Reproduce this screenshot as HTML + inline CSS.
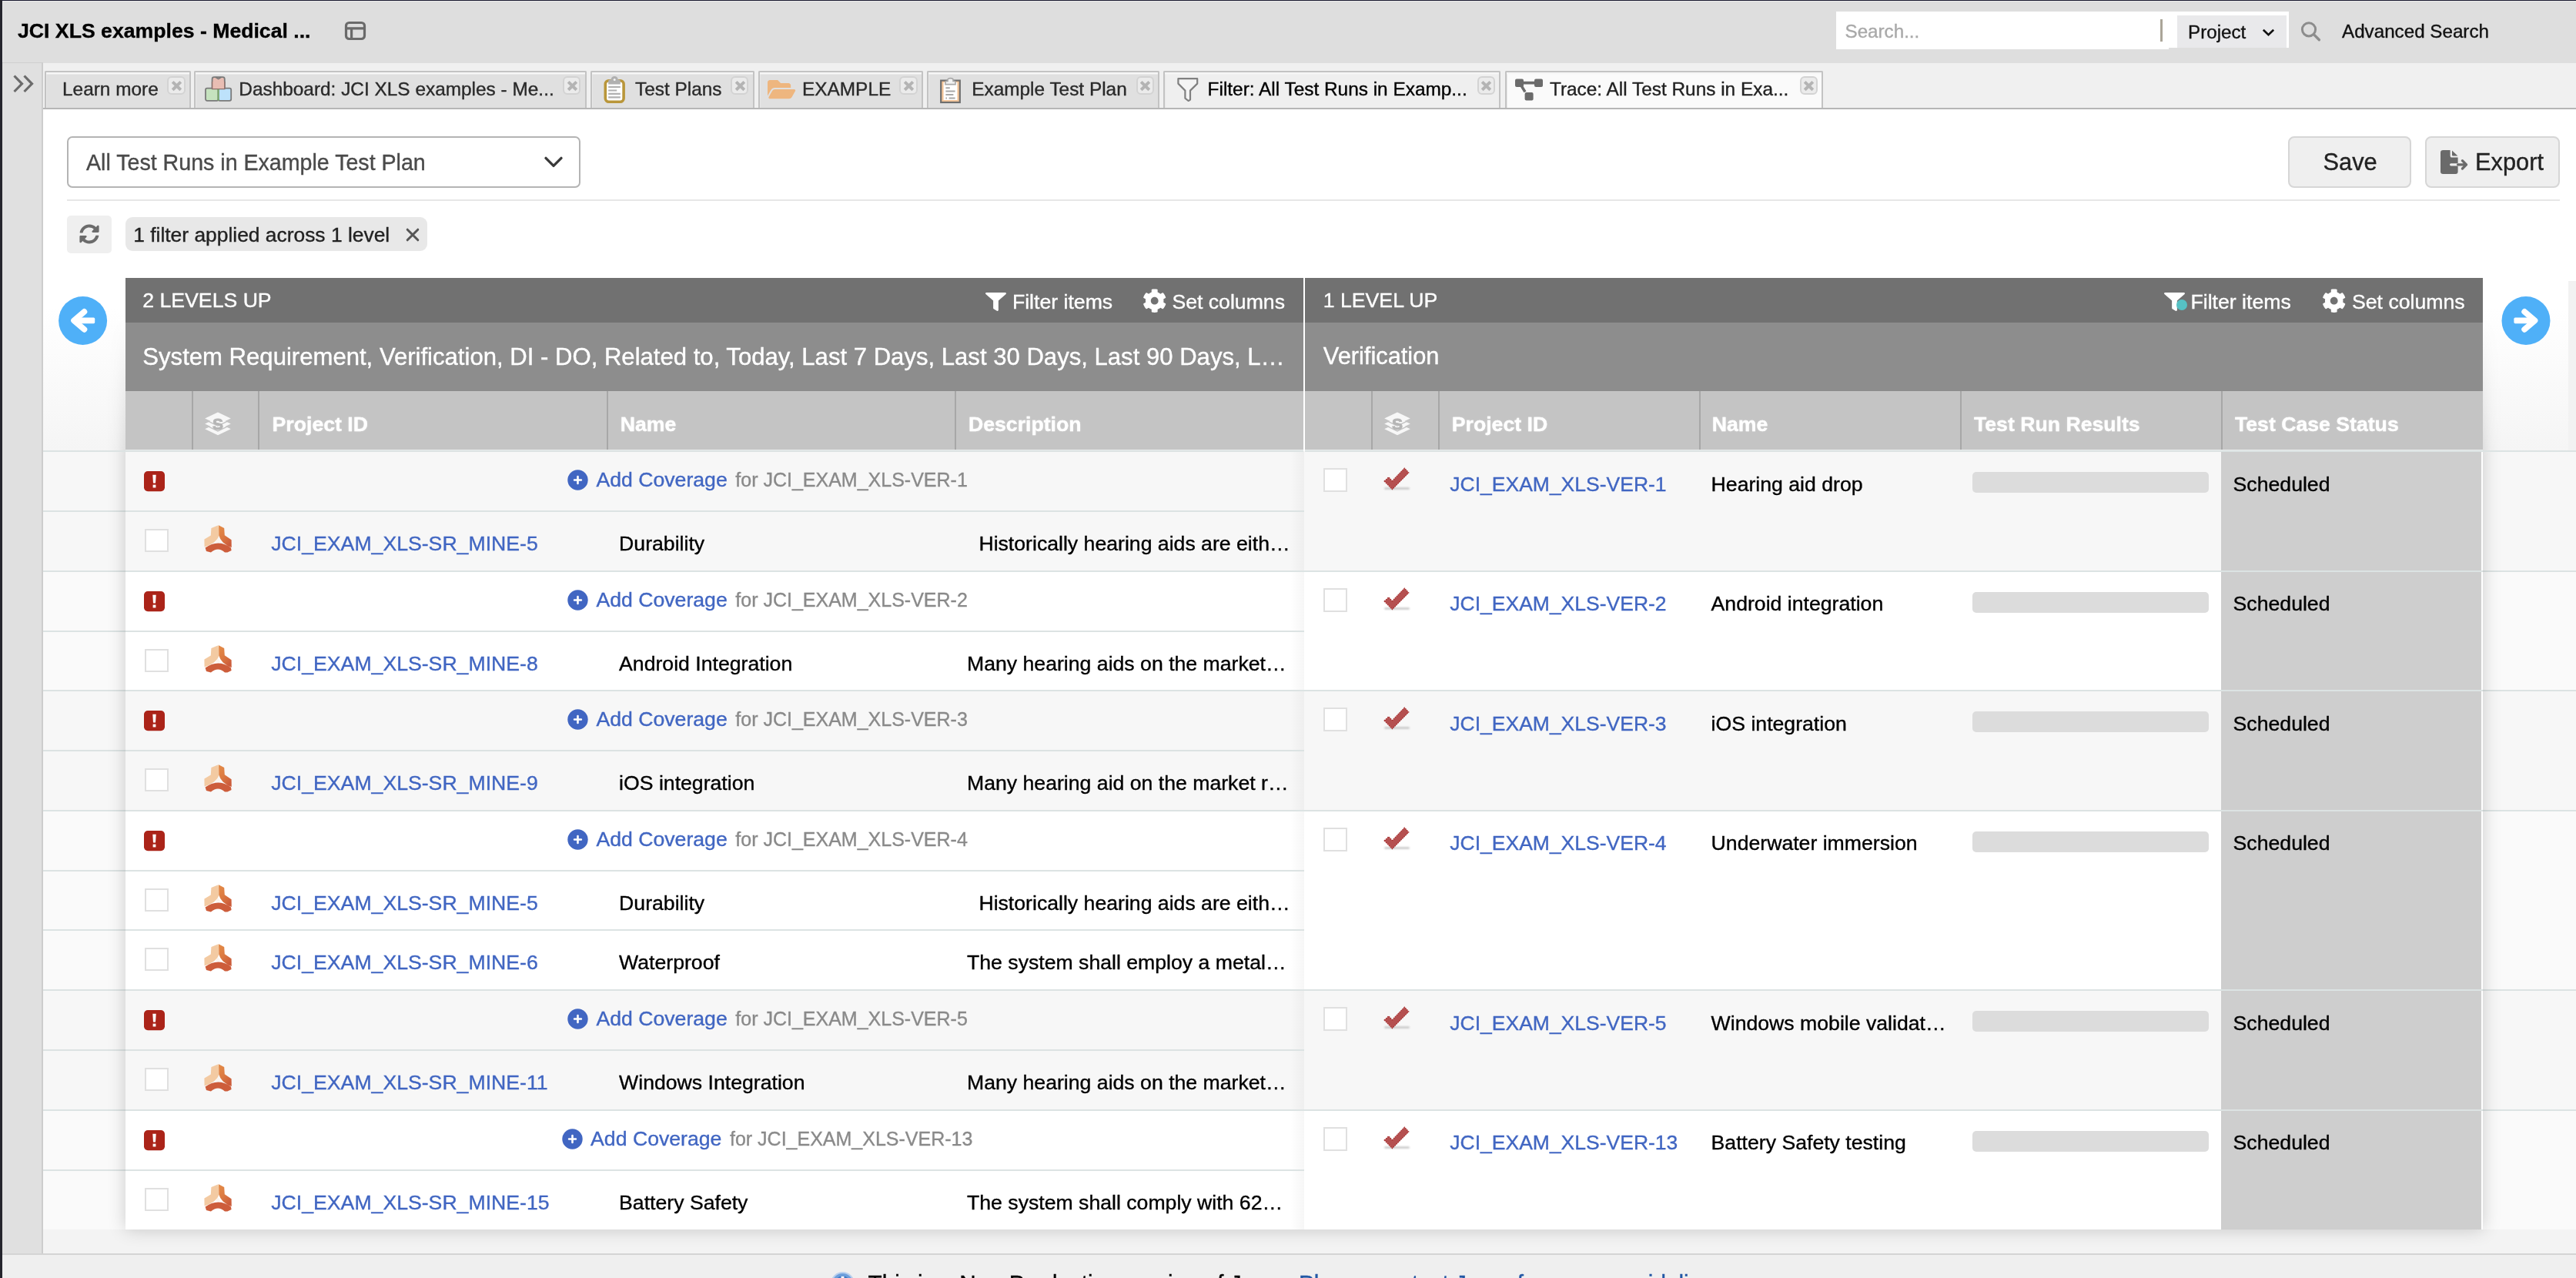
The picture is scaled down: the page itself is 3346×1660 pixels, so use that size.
<!DOCTYPE html>
<html><head><meta charset="utf-8"><title>Trace</title>
<style>
html,body{margin:0;padding:0;}
body{width:3346px;height:1660px;overflow:hidden;background:#fff;position:relative;font-family:"Liberation Sans",sans-serif;}
.t{position:absolute;white-space:pre;-webkit-text-stroke:0.36px currentColor;}
.b{position:absolute;}
svg{position:absolute;overflow:visible;}
.tab{position:absolute;top:92.3px;height:48px;box-sizing:border-box;border:2px solid #c3c3c3;border-bottom:none;background:#e0e0e0;border-radius:2px 2px 0 0;box-shadow:inset 0 2.5px 0 #f6f6f6, inset 1px 0 0 #e8e8e8;}
.cx{position:absolute;top:99.3px;width:23.4px;height:23.4px;box-sizing:border-box;border:2px solid #d3d3d3;border-radius:6px;background:#ebebeb;}
.cb{position:absolute;width:30.6px;height:30.6px;box-sizing:border-box;border:2px solid #e0e0e0;background:#fff;}
</style></head><body><div id="w" style="position:absolute;left:0;top:0;width:3346px;height:1660px;will-change:transform;">

<div class="b" style="left:0px;top:0px;width:3346px;height:81.5px;background:#dedede;"></div>
<div class="b" style="left:0px;top:0px;width:3346px;height:1px;background:#18182e;"></div>
<div class="b" style="left:3px;top:1px;width:3343px;height:1px;background:#eaeaea;"></div>
<div class="b" style="left:3px;top:1px;width:1px;height:80px;background:#eaeaea;"></div>
<div class="b" style="left:56px;top:81.5px;width:3290px;height:58.5px;background:#f0f0f0;"></div>
<div class="b" style="left:3px;top:81px;width:53px;height:1547px;background:#e0e0e0;box-sizing:border-box;border-top:1.5px solid #cfcfcf;border-right:2px solid #cdcdcd;"></div>
<div class="b" style="left:0px;top:0px;width:3px;height:1660px;background:#25252d;"></div>
<div class="b" style="left:56px;top:140px;width:3290px;height:2px;background:#b6b6b6;"></div>
<div class="t" style="left:23px;top:26.74px;font-size:26.65px;line-height:26.65px;color:#000;font-weight:700;">JCI XLS examples - Medical ...</div>
<svg style="left:447px;top:27px" width="29" height="26" viewBox="0 0 29 26"><rect x="2.5" y="2.5" width="24" height="21" rx="4" fill="none" stroke="#6a6a6a" stroke-width="3.2"/><path d="M2.5 9.8H26.5M9.6 9.8V23.5" stroke="#6a6a6a" stroke-width="3.2" fill="none"/></svg>
<div class="b" style="left:2385px;top:15px;width:432px;height:49px;background:#fff;"></div>
<div class="b" style="left:2817px;top:15px;width:156px;height:47px;background:#fff;"></div>
<div class="b" style="left:2828px;top:20px;width:142px;height:42px;background:#e9e9eb;"></div>
<div class="b" style="left:2806px;top:25px;width:3px;height:29px;background:#aaa598;"></div>
<div class="t" style="left:2396.5px;top:28.81px;font-size:24.2px;line-height:24.2px;color:#a9a9a9;font-weight:400;">Search...</div>
<div class="t" style="left:2842px;top:29.71px;font-size:24.2px;line-height:24.2px;color:#111;font-weight:400;">Project</div>
<svg style="left:2938px;top:37px" width="17" height="11" viewBox="0 0 17 11"><path d="M1.8 1.8L8.5 8.3L15.2 1.8" fill="none" stroke="#111" stroke-width="2.6"/></svg>
<svg style="left:2986px;top:27px" width="30" height="28" viewBox="0 0 30 28"><circle cx="13" cy="11.3" r="8.6" fill="none" stroke="#8c8c8c" stroke-width="3"/><path d="M19.3 17.6L26.4 24.8" stroke="#8c8c8c" stroke-width="3.4" stroke-linecap="round"/></svg>
<div class="t" style="left:3042px;top:29.11px;font-size:24.2px;line-height:24.2px;color:#111;font-weight:400;">Advanced Search</div>
<svg style="left:16px;top:96px" width="30" height="26" viewBox="0 0 30 26"><path d="M2.5 2.5L12.5 12.8L2.5 23M15.5 2.5L25.5 12.8L15.5 23" fill="none" stroke="#6b6b6b" stroke-width="3.2"/></svg>
<div class="tab" style="left:58px;width:189.7px;background:#e0e0e0"></div>
<div class="t" style="left:81px;top:103.65px;font-size:24.4px;line-height:24.4px;color:#2a2a2a;font-weight:400;">Learn more</div>
<div class="cx" style="left:217.3px"></div><svg style="left:217.70000000000002px;top:99.8px" width="23" height="23" viewBox="0 0 23 23"><path d="M6.2 6.4L16.8 16.8M16.8 6.4L6.2 16.8" stroke="#b4b4b4" stroke-width="4" fill="none" style="filter:blur(.55px)"/></svg>
<div class="tab" style="left:252px;width:509.5px;background:#e0e0e0"></div>
<svg style="left:265.6px;top:98px" width="36" height="35" viewBox="0 0 36 35"><rect x="9.6" y="2.2" width="16.2" height="15.5" rx="2.5" fill="#e8bdb3" stroke="#7a7a7a" stroke-width="1.8"/><path d="M14 2.2l3.7 2.2l3.7-2.2" fill="none" stroke="#7a7a7a" stroke-width="1.8"/><rect x="1" y="16.6" width="16.6" height="16.2" rx="2" fill="#c5e2be" stroke="#7a7a7a" stroke-width="1.8"/><rect x="17.6" y="16.6" width="16.6" height="16.2" rx="2" fill="#bde2fb" stroke="#7a7a7a" stroke-width="1.8"/><rect x="9.6" y="8" width="16.2" height="9.2" fill="#e8bdb3"/><path d="M9.6 8v9.6h16.2V8" fill="none" stroke="#8a6f6a" stroke-width="1.4"/><path d="M17.6 17.8V32.6" stroke="#7aaa6a" stroke-width="2"/></svg>
<div class="t" style="left:310.3px;top:103.65px;font-size:24.4px;line-height:24.4px;color:#2a2a2a;font-weight:400;">Dashboard: JCI XLS examples - Me...</div>
<div class="cx" style="left:731.1px"></div><svg style="left:731.5px;top:99.8px" width="23" height="23" viewBox="0 0 23 23"><path d="M6.2 6.4L16.8 16.8M16.8 6.4L6.2 16.8" stroke="#b4b4b4" stroke-width="4" fill="none" style="filter:blur(.55px)"/></svg>
<div class="tab" style="left:767px;width:212.5px;background:#e0e0e0"></div>
<svg style="left:784.3px;top:98px" width="30" height="37" viewBox="0 0 30 37"><rect x="2.3" y="6.8" width="23.8" height="27.4" rx="4.5" fill="#fff" stroke="#b9963a" stroke-width="3.6"/><path d="M6.2 11.6V7.2Q6.2 5.6 8 5.6H9.6A4.6 4.6 0 0 1 18.8 5.6H20.2Q21.8 5.6 21.8 7.2V11.6Z" fill="#b0b0b0"/><circle cx="14.2" cy="5.4" r="1.5" fill="#f4f4f4"/><path d="M6.2 15h15.6M6.2 19.5h11M6.2 23.9h15.6M6.2 28.3h15.6" stroke="#b0b0b0" stroke-width="2.2"/></svg>
<div class="t" style="left:825px;top:103.65px;font-size:24.4px;line-height:24.4px;color:#2a2a2a;font-weight:400;">Test Plans</div>
<div class="cx" style="left:949.1px"></div><svg style="left:949.5px;top:99.8px" width="23" height="23" viewBox="0 0 23 23"><path d="M6.2 6.4L16.8 16.8M16.8 6.4L6.2 16.8" stroke="#b4b4b4" stroke-width="4" fill="none" style="filter:blur(.55px)"/></svg>
<div class="tab" style="left:984.6px;width:214.1px;background:#e0e0e0"></div>
<svg style="left:996.9px;top:100.4px" width="36.2" height="32.2" viewBox="0 0 576 512"><path fill="#eeb67f" d="M572.694 292.093L500.27 416.248A63.997 63.997 0 0 1 444.989 448H45.025c-18.523 0-30.064-20.093-20.731-36.093l72.424-124.155A64 64 0 0 1 152 256h399.964c18.523 0 30.064 20.093 20.73 36.093zM152 224h328v-48c0-26.51-21.49-48-48-48H272l-64-64H48C21.49 64 0 85.49 0 112v278.046l69.077-118.418C86.214 242.25 117.989 224 152 224z"/></svg>
<div class="t" style="left:1042px;top:103.65px;font-size:24.4px;line-height:24.4px;color:#2a2a2a;font-weight:400;">EXAMPLE</div>
<div class="cx" style="left:1168.3px"></div><svg style="left:1168.7px;top:99.8px" width="23" height="23" viewBox="0 0 23 23"><path d="M6.2 6.4L16.8 16.8M16.8 6.4L6.2 16.8" stroke="#b4b4b4" stroke-width="4" fill="none" style="filter:blur(.55px)"/></svg>
<div class="tab" style="left:1204px;width:302.0px;background:#e0e0e0"></div>
<svg style="left:1221.4px;top:100px" width="28" height="35" viewBox="0 0 28 35"><rect x="1.2" y="4.6" width="24.6" height="28.4" fill="#f5c69a" stroke="#6e6e6e" stroke-width="2.2"/><rect x="4.6" y="7" width="17.8" height="23" fill="#fff"/><path d="M7 9.6V6.6Q7 5.4 8.4 5.4H10V3.6Q10 1.6 13.5 1.6T17 3.6V5.4H18.6Q20 5.4 20 6.6V9.6Z" fill="#f2f2f2" stroke="#a8a8a8" stroke-width="1.6"/><path d="M7.4 14.2h5.4M7.4 18.6h12.2M7.4 23h10M11.6 27.4h8M7.4 27.4h1.6" stroke="#a8a8a8" stroke-width="2"/></svg>
<div class="t" style="left:1262.2px;top:103.65px;font-size:24.4px;line-height:24.4px;color:#2a2a2a;font-weight:400;">Example Test Plan</div>
<div class="cx" style="left:1475.6px"></div><svg style="left:1476.0px;top:99.8px" width="23" height="23" viewBox="0 0 23 23"><path d="M6.2 6.4L16.8 16.8M16.8 6.4L6.2 16.8" stroke="#b4b4b4" stroke-width="4" fill="none" style="filter:blur(.55px)"/></svg>
<div class="tab" style="left:1511px;width:438.0px;background:#efefef"></div>
<svg style="left:1528.6px;top:100px" width="29" height="33" viewBox="0 0 29 33"><path d="M1.4 2.2H26.2V8.6L17 17.6V29.6L14.6 31L10.4 27.6V17.6L1.4 8.6Z" fill="#f4f4f4" stroke="#808080" stroke-width="2.2" stroke-linejoin="round"/></svg>
<div class="t" style="left:1568.6px;top:103.65px;font-size:24.4px;line-height:24.4px;color:#000;font-weight:400;">Filter: All Test Runs in Examp...</div>
<div class="cx" style="left:1918.6px"></div><svg style="left:1919.0px;top:99.8px" width="23" height="23" viewBox="0 0 23 23"><path d="M6.2 6.4L16.8 16.8M16.8 6.4L6.2 16.8" stroke="#b4b4b4" stroke-width="4" fill="none" style="filter:blur(.55px)"/></svg>
<div class="tab" style="left:1955.3px;width:412.7px;background:#fafafa"></div>
<svg style="left:1968px;top:102px" width="37" height="30" viewBox="0 0 37 30"><rect x="0" y="0.4" width="11" height="10.6" rx="2" fill="#6b6b6b"/><rect x="25" y="0.4" width="11" height="10.6" rx="2" fill="#6b6b6b"/><rect x="12.6" y="18" width="11" height="10.6" rx="2" fill="#6b6b6b"/><path d="M10 5.6H26M7.6 8.6L13 17.4" stroke="#6b6b6b" stroke-width="3.6"/></svg>
<div class="t" style="left:2012.9px;top:103.65px;font-size:24.4px;line-height:24.4px;color:#222;font-weight:400;">Trace: All Test Runs in Exa...</div>
<div class="cx" style="left:2337.6px"></div><svg style="left:2338.0px;top:99.8px" width="23" height="23" viewBox="0 0 23 23"><path d="M6.2 6.4L16.8 16.8M16.8 6.4L6.2 16.8" stroke="#b4b4b4" stroke-width="4" fill="none" style="filter:blur(.55px)"/></svg>
<div class="b" style="left:87px;top:177px;width:667px;height:67px;background:#fff;box-sizing:border-box;border:2px solid #b4b4b4;border-radius:7px;"></div>
<div class="t" style="left:112px;top:196.89px;font-size:28.6px;line-height:28.6px;color:#4a4a4a;font-weight:400;">All Test Runs in Example Test Plan</div>
<svg style="left:706px;top:202px" width="26" height="18" viewBox="0 0 26 18"><path d="M3 3.4L13 13.4L23 3.4" fill="none" stroke="#3a3a3a" stroke-width="3.4" stroke-linecap="round" stroke-linejoin="round"/></svg>
<div class="b" style="left:2972px;top:177px;width:160px;height:67px;background:#efefef;box-sizing:border-box;border:2px solid #d6d6d6;border-radius:8px;"></div>
<div class="b" style="left:3150px;top:177px;width:175px;height:67px;background:#efefef;box-sizing:border-box;border:2px solid #d6d6d6;border-radius:8px;"></div>
<div class="t" style="left:3017.5px;top:195.93px;font-size:30.8px;line-height:30.8px;color:#222;font-weight:400;">Save</div>
<div class="t" style="left:3215px;top:195.93px;font-size:30.8px;line-height:30.8px;color:#222;font-weight:400;">Export</div>
<svg style="left:3169.6px;top:194.6px" width="36" height="32" viewBox="0 0 36 32"><path d="M3.4 0H12.6V7.4Q12.6 9.6 14.8 9.6H22.6V17.2H13.6Q12 17.2 12 18.8T13.6 20.4H22.6V28Q22.6 31 19.6 31H3.4Q0 31 0 28V3.2Q0 0 3.4 0Z" fill="#6a6a6a"/><path d="M15 0.4L22.4 7.6H16.4Q15 7.6 15 6.2Z" fill="#6a6a6a"/><path d="M22.6 18.8H32.6M28.4 13.6L33.6 18.8L28.4 24" fill="none" stroke="#6a6a6a" stroke-width="3.2" stroke-linecap="round" stroke-linejoin="round"/></svg>
<div class="b" style="left:87px;top:259px;width:3238px;height:2px;background:#e6e6e6;"></div>
<div class="b" style="left:87px;top:280px;width:58px;height:49px;background:#efefef;border-radius:5px;"></div>
<svg style="left:103.4px;top:291px" width="26" height="26" viewBox="0 0 512 512"><path fill="#6b6b6b" d="M370.72 133.28C339.458 104.008 298.888 87.962 255.848 88c-77.458.068-144.328 53.178-162.791 126.85-1.344 5.363-6.122 9.15-11.651 9.15H24.103c-7.498 0-13.194-6.807-11.807-14.176C33.933 94.924 134.813 8 256 8c66.448 0 126.791 26.136 171.315 68.685L463.03 40.97C478.149 25.851 504 36.559 504 57.941V192c0 13.255-10.745 24-24 24H345.941c-21.382 0-32.09-25.851-16.971-40.971l41.75-41.749zM32 296h134.059c21.382 0 32.09 25.851 16.971 40.971l-41.75 41.75c31.262 29.273 71.835 45.319 114.876 45.28 77.418-.07 144.315-53.144 162.787-126.849 1.344-5.363 6.122-9.15 11.651-9.15h57.304c7.498 0 13.194 6.807 11.807 14.176C478.067 417.076 377.187 504 256 504c-66.448 0-126.791-26.136-171.315-68.685L48.97 471.03C33.851 486.149 8 475.441 8 454.059V320c0-13.255 10.745-24 24-24z"/></svg>
<div class="b" style="left:163px;top:282px;width:392px;height:44px;background:#e8e8e8;border-radius:9px;"></div>
<div class="t" style="left:173.2px;top:291.55px;font-size:26.4px;line-height:26.4px;color:#222;font-weight:400;">1 filter applied across 1 level</div>
<svg style="left:526px;top:294.5px" width="20" height="20" viewBox="0 0 20 20"><path d="M3.2 3.2L16.8 16.8M16.8 3.2L3.2 16.8" stroke="#555" stroke-width="3" stroke-linecap="round"/></svg>
<div class="b" style="left:56px;top:586px;width:3290px;height:1042px;background:#f3f3f3;"></div>
<div class="b" style="left:56px;top:586px;width:3290px;height:156px;background:#f7f7f7;"></div>
<div class="b" style="left:56px;top:742px;width:3290px;height:155px;background:#fafafa;"></div>
<div class="b" style="left:56px;top:897px;width:3290px;height:156px;background:#f7f7f7;"></div>
<div class="b" style="left:56px;top:1053px;width:3290px;height:233px;background:#fafafa;"></div>
<div class="b" style="left:56px;top:1286px;width:3290px;height:156px;background:#f7f7f7;"></div>
<div class="b" style="left:56px;top:1442px;width:3290px;height:155px;background:#fafafa;"></div>
<div class="b" style="left:56px;top:361px;width:107px;height:225px;background:linear-gradient(#fff 18%,#f5f5f5 100%);"></div>
<div class="b" style="left:3225px;top:361px;width:111px;height:225px;background:linear-gradient(#fff 18%,#f5f5f5 100%);"></div>
<div class="b" style="left:3336px;top:365px;width:10px;height:221px;background:#f2f2f2;"></div>
<div class="b" style="left:56px;top:585px;width:107px;height:2px;background:#dce3e3;"></div>
<div class="b" style="left:56px;top:663px;width:107px;height:2px;background:#dce3e3;"></div>
<div class="b" style="left:56px;top:741px;width:107px;height:2px;background:#dce3e3;"></div>
<div class="b" style="left:56px;top:819px;width:107px;height:2px;background:#dce3e3;"></div>
<div class="b" style="left:56px;top:896px;width:107px;height:2px;background:#dce3e3;"></div>
<div class="b" style="left:56px;top:974px;width:107px;height:2px;background:#dce3e3;"></div>
<div class="b" style="left:56px;top:1052px;width:107px;height:2px;background:#dce3e3;"></div>
<div class="b" style="left:56px;top:1130px;width:107px;height:2px;background:#dce3e3;"></div>
<div class="b" style="left:56px;top:1207px;width:107px;height:2px;background:#dce3e3;"></div>
<div class="b" style="left:56px;top:1285px;width:107px;height:2px;background:#dce3e3;"></div>
<div class="b" style="left:56px;top:1363px;width:107px;height:2px;background:#dce3e3;"></div>
<div class="b" style="left:56px;top:1441px;width:107px;height:2px;background:#dce3e3;"></div>
<div class="b" style="left:56px;top:1519px;width:107px;height:2px;background:#dce3e3;"></div>
<div class="b" style="left:3225px;top:585px;width:121px;height:2px;background:#dce3e3;"></div>
<div class="b" style="left:3225px;top:741px;width:121px;height:2px;background:#dce3e3;"></div>
<div class="b" style="left:3225px;top:896px;width:121px;height:2px;background:#dce3e3;"></div>
<div class="b" style="left:3225px;top:1052px;width:121px;height:2px;background:#dce3e3;"></div>
<div class="b" style="left:3225px;top:1285px;width:121px;height:2px;background:#dce3e3;"></div>
<div class="b" style="left:3225px;top:1441px;width:121px;height:2px;background:#dce3e3;"></div>
<div class="b" style="left:56px;top:361px;width:3290px;height:1267px;overflow:hidden;-webkit-mask-image:linear-gradient(#0000 50px,#000 235px);mask-image:linear-gradient(#0000 50px,#000 235px);"><div class="b" style="left:107px;top:0;width:3062px;height:1235.6px;box-shadow:0 0 22px 0 rgba(0,0,0,.19);"></div></div>
<div class="b" style="left:3px;top:1629px;width:3343px;height:31px;background:#efefef;"></div>
<div class="b" style="left:3px;top:1628px;width:3343px;height:2px;background:#d4d4d4;"></div>
<svg style="left:0;top:0" width="3346" height="600" viewBox="0 0 3346 600"><g transform=""><circle cx="107.6" cy="416.5" r="31.5" fill="#4fb0f8"/><rect x="97.6" y="412.6" width="25.6" height="7.6" rx="1.6" fill="#fff"/><path d="M109.5 404.9L96.0 416.4L109.5 427.9" fill="none" stroke="#fff" stroke-width="7.6" stroke-linecap="round" stroke-linejoin="round"/></g></svg>
<svg style="left:0;top:0" width="3346" height="600" viewBox="0 0 3346 600"><g transform="translate(6562,0) scale(-1,1)"><circle cx="3281" cy="416.5" r="31.5" fill="#4fb0f8"/><rect x="3271" y="412.6" width="25.6" height="7.6" rx="1.6" fill="#fff"/><path d="M3282.9 404.9L3269.4 416.4L3282.9 427.9" fill="none" stroke="#fff" stroke-width="7.6" stroke-linecap="round" stroke-linejoin="round"/></g></svg>
<div class="b" style="left:163px;top:586px;width:3062px;height:156px;background:#f7f7f7;"></div>
<div class="b" style="left:2885px;top:586px;width:337.5px;height:156px;background:#cecece;"></div>
<div class="b" style="left:163px;top:742px;width:3062px;height:155px;background:#ffffff;"></div>
<div class="b" style="left:2885px;top:742px;width:337.5px;height:155px;background:#cecece;"></div>
<div class="b" style="left:163px;top:897px;width:3062px;height:156px;background:#f7f7f7;"></div>
<div class="b" style="left:2885px;top:897px;width:337.5px;height:156px;background:#cecece;"></div>
<div class="b" style="left:163px;top:1053px;width:3062px;height:233px;background:#ffffff;"></div>
<div class="b" style="left:2885px;top:1053px;width:337.5px;height:233px;background:#cecece;"></div>
<div class="b" style="left:163px;top:1286px;width:3062px;height:156px;background:#f7f7f7;"></div>
<div class="b" style="left:2885px;top:1286px;width:337.5px;height:156px;background:#cecece;"></div>
<div class="b" style="left:163px;top:1442px;width:3062px;height:154.6px;background:#ffffff;"></div>
<div class="b" style="left:2885px;top:1442px;width:337.5px;height:154.6px;background:#cecece;"></div>
<div class="b" style="left:1693px;top:361px;width:2px;height:223px;background:#fff;"></div>
<div class="b" style="left:3222.5px;top:586px;width:2.5px;height:1010.5999999999999px;background:#fff;"></div>
<div class="b" style="left:1676px;top:586px;width:18px;height:1010.5999999999999px;background:linear-gradient(90deg,rgba(0,0,0,0),rgba(0,0,0,.035));"></div>
<div class="b" style="left:163px;top:663px;width:1531px;height:2px;background:#dce3e3;"></div>
<div class="b" style="left:163px;top:741px;width:1531px;height:2px;background:#dce3e3;"></div>
<div class="b" style="left:163px;top:819px;width:1531px;height:2px;background:#dce3e3;"></div>
<div class="b" style="left:163px;top:896px;width:1531px;height:2px;background:#dce3e3;"></div>
<div class="b" style="left:163px;top:974px;width:1531px;height:2px;background:#dce3e3;"></div>
<div class="b" style="left:163px;top:1052px;width:1531px;height:2px;background:#dce3e3;"></div>
<div class="b" style="left:163px;top:1130px;width:1531px;height:2px;background:#dce3e3;"></div>
<div class="b" style="left:163px;top:1207px;width:1531px;height:2px;background:#dce3e3;"></div>
<div class="b" style="left:163px;top:1285px;width:1531px;height:2px;background:#dce3e3;"></div>
<div class="b" style="left:163px;top:1363px;width:1531px;height:2px;background:#dce3e3;"></div>
<div class="b" style="left:163px;top:1441px;width:1531px;height:2px;background:#dce3e3;"></div>
<div class="b" style="left:163px;top:1519px;width:1531px;height:2px;background:#dce3e3;"></div>
<div class="b" style="left:1694px;top:741px;width:1531px;height:2px;background:#dce3e3;"></div>
<div class="b" style="left:1694px;top:896px;width:1531px;height:2px;background:#dce3e3;"></div>
<div class="b" style="left:1694px;top:1052px;width:1531px;height:2px;background:#dce3e3;"></div>
<div class="b" style="left:1694px;top:1285px;width:1531px;height:2px;background:#dce3e3;"></div>
<div class="b" style="left:1694px;top:1441px;width:1531px;height:2px;background:#dce3e3;"></div>
<div class="b" style="left:163px;top:361px;width:1530px;height:58px;background:#717171;"></div>
<div class="b" style="left:163px;top:418.5px;width:1530px;height:89.5px;background:#8d8d8d;"></div>
<div class="b" style="left:163px;top:507.6px;width:1530px;height:76.4px;background:#c4c4c4;"></div>
<div class="b" style="left:163px;top:584px;width:1530px;height:1px;background:#e9eded;"></div>
<div class="b" style="left:163px;top:585px;width:1530px;height:2px;background:#dce3e3;"></div>
<div class="b" style="left:1695px;top:361px;width:1530px;height:58px;background:#717171;"></div>
<div class="b" style="left:1695px;top:418.5px;width:1530px;height:89.5px;background:#8d8d8d;"></div>
<div class="b" style="left:1695px;top:507.6px;width:1530px;height:76.4px;background:#c4c4c4;"></div>
<div class="b" style="left:1695px;top:584px;width:1530px;height:1px;background:#e9eded;"></div>
<div class="b" style="left:1695px;top:585px;width:1530px;height:2px;background:#dce3e3;"></div>
<div class="b" style="left:56px;top:585px;width:107px;height:2px;background:#dce3e3;"></div>
<div class="b" style="left:3225px;top:585px;width:121px;height:2px;background:#dce3e3;"></div>
<div class="b" style="left:248.6px;top:508px;width:2px;height:76px;background:#a7a7a7;"></div>
<div class="b" style="left:334.8px;top:508px;width:2px;height:76px;background:#a7a7a7;"></div>
<div class="b" style="left:788px;top:508px;width:2px;height:76px;background:#a7a7a7;"></div>
<div class="b" style="left:1240px;top:508px;width:2px;height:76px;background:#a7a7a7;"></div>
<div class="b" style="left:1781px;top:508px;width:2px;height:76px;background:#a7a7a7;"></div>
<div class="b" style="left:1868px;top:508px;width:2px;height:76px;background:#a7a7a7;"></div>
<div class="b" style="left:2206.7px;top:508px;width:2px;height:76px;background:#a7a7a7;"></div>
<div class="b" style="left:2546px;top:508px;width:2px;height:76px;background:#a7a7a7;"></div>
<div class="b" style="left:2885px;top:508px;width:2px;height:76px;background:#a7a7a7;"></div>
<div class="t" style="left:185.3px;top:376.84px;font-size:26.65px;line-height:26.65px;color:#fff;font-weight:400;">2 LEVELS UP</div>
<div class="t" style="left:1718.8px;top:376.84px;font-size:26.65px;line-height:26.65px;color:#fff;font-weight:400;">1 LEVEL UP</div>
<div class="t" style="left:185.3px;top:447.87px;font-size:31.1px;line-height:31.1px;color:#fff;font-weight:400;">System Requirement, Verification, DI - DO, Related to, Today, Last 7 Days, Last 30 Days, Last 90 Days, L…</div>
<div class="t" style="left:1718.8px;top:448.13px;font-size:30.8px;line-height:30.8px;color:#fff;font-weight:400;">Verification</div>
<div class="t" style="left:353.6px;top:538.24px;font-size:26.65px;line-height:26.65px;color:#fff;font-weight:700;text-shadow:0 0 3px rgba(255,255,255,.35);">Project ID</div>
<div class="t" style="left:805.8px;top:538.24px;font-size:26.65px;line-height:26.65px;color:#fff;font-weight:700;text-shadow:0 0 3px rgba(255,255,255,.35);">Name</div>
<div class="t" style="left:1258px;top:538.24px;font-size:26.65px;line-height:26.65px;color:#fff;font-weight:700;text-shadow:0 0 3px rgba(255,255,255,.35);">Description</div>
<div class="t" style="left:1885.8px;top:538.24px;font-size:26.65px;line-height:26.65px;color:#fff;font-weight:700;text-shadow:0 0 3px rgba(255,255,255,.35);">Project ID</div>
<div class="t" style="left:2223.7px;top:538.24px;font-size:26.65px;line-height:26.65px;color:#fff;font-weight:700;text-shadow:0 0 3px rgba(255,255,255,.35);">Name</div>
<div class="t" style="left:2564px;top:538.24px;font-size:26.65px;line-height:26.65px;color:#fff;font-weight:700;text-shadow:0 0 3px rgba(255,255,255,.35);">Test Run Results</div>
<div class="t" style="left:2903px;top:538.24px;font-size:26.65px;line-height:26.65px;color:#fff;font-weight:700;text-shadow:0 0 3px rgba(255,255,255,.35);">Test Case Status</div>
<svg style="left:1280.1px;top:380px" width="27" height="24" viewBox="0 0 512 512" preserveAspectRatio="none"><path fill="#fff" d="M487.976 0H24.028C2.71 0-8.047 25.866 7.058 40.971L192 225.941V432c0 7.831 3.821 15.17 10.237 19.662l80 55.98C298.02 518.69 320 507.493 320 487.98V225.941l184.947-184.97C520.021 25.896 509.338 0 487.976 0z"/></svg><div class="t" style="left:1314.9px;top:379.04px;font-size:26.65px;line-height:26.65px;color:#fff;font-weight:400;">Filter items</div><svg style="left:1484px;top:374.6px" width="31.4" height="31.4" viewBox="0 0 512 512"><path fill="#fff" d="M487.4 315.7l-42.6-24.6c4.3-23.2 4.3-47 0-70.2l42.6-24.6c4.9-2.8 7.1-8.6 5.5-14-11.1-35.6-30-67.8-54.7-94.6-3.8-4.1-10-5.1-14.8-2.3L380.8 110c-17.9-15.4-38.5-27.3-60.8-35.1V25.8c0-5.6-3.9-10.5-9.4-11.7-36.7-8.2-74.3-7.8-109.2 0-5.5 1.2-9.4 6.1-9.4 11.7V75c-22.2 7.9-42.8 19.8-60.8 35.1L88.7 85.5c-4.9-2.8-11-1.9-14.8 2.3-24.7 26.7-43.6 58.9-54.7 94.6-1.7 5.4.6 11.2 5.5 14L67.3 221c-4.3 23.2-4.3 47 0 70.2l-42.6 24.6c-4.9 2.8-7.1 8.6-5.5 14 11.1 35.6 30 67.8 54.7 94.6 3.8 4.1 10 5.1 14.8 2.3l42.6-24.6c17.9 15.4 38.5 27.3 60.8 35.1v49.2c0 5.6 3.9 10.5 9.4 11.7 36.7 8.2 74.3 7.8 109.2 0 5.5-1.2 9.4-6.1 9.4-11.7v-49.2c22.2-7.9 42.8-19.8 60.8-35.1l42.6 24.6c4.9 2.8 11 1.9 14.8-2.3 24.7-26.7 43.6-58.9 54.7-94.6 1.5-5.5-.7-11.3-5.6-14.1zM256 336c-44.1 0-80-35.9-80-80s35.9-80 80-80 80 35.9 80 80-35.9 80-80 80z"/></svg><div class="t" style="left:1522.4px;top:379.04px;font-size:26.65px;line-height:26.65px;color:#fff;font-weight:400;">Set columns</div>
<svg style="left:2810.5px;top:380px" width="27" height="24" viewBox="0 0 512 512" preserveAspectRatio="none"><path fill="#fff" d="M487.976 0H24.028C2.71 0-8.047 25.866 7.058 40.971L192 225.941V432c0 7.831 3.821 15.17 10.237 19.662l80 55.98C298.02 518.69 320 507.493 320 487.98V225.941l184.947-184.97C520.021 25.896 509.338 0 487.976 0z"/></svg><div class="b" style="left:2826.9px;top:389px;width:14px;height:14px;border-radius:7px;background:#56c1c4"></div><div class="t" style="left:2845.5px;top:379.04px;font-size:26.65px;line-height:26.65px;color:#fff;font-weight:400;">Filter items</div><svg style="left:3016.4px;top:374.6px" width="31.4" height="31.4" viewBox="0 0 512 512"><path fill="#fff" d="M487.4 315.7l-42.6-24.6c4.3-23.2 4.3-47 0-70.2l42.6-24.6c4.9-2.8 7.1-8.6 5.5-14-11.1-35.6-30-67.8-54.7-94.6-3.8-4.1-10-5.1-14.8-2.3L380.8 110c-17.9-15.4-38.5-27.3-60.8-35.1V25.8c0-5.6-3.9-10.5-9.4-11.7-36.7-8.2-74.3-7.8-109.2 0-5.5 1.2-9.4 6.1-9.4 11.7V75c-22.2 7.9-42.8 19.8-60.8 35.1L88.7 85.5c-4.9-2.8-11-1.9-14.8 2.3-24.7 26.7-43.6 58.9-54.7 94.6-1.7 5.4.6 11.2 5.5 14L67.3 221c-4.3 23.2-4.3 47 0 70.2l-42.6 24.6c-4.9 2.8-7.1 8.6-5.5 14 11.1 35.6 30 67.8 54.7 94.6 3.8 4.1 10 5.1 14.8 2.3l42.6-24.6c17.9 15.4 38.5 27.3 60.8 35.1v49.2c0 5.6 3.9 10.5 9.4 11.7 36.7 8.2 74.3 7.8 109.2 0 5.5-1.2 9.4-6.1 9.4-11.7v-49.2c22.2-7.9 42.8-19.8 60.8-35.1l42.6 24.6c4.9 2.8 11 1.9 14.8-2.3 24.7-26.7 43.6-58.9 54.7-94.6 1.5-5.5-.7-11.3-5.6-14.1zM256 336c-44.1 0-80-35.9-80-80s35.9-80 80-80 80 35.9 80 80-35.9 80-80 80z"/></svg><div class="t" style="left:3055px;top:379.04px;font-size:26.65px;line-height:26.65px;color:#fff;font-weight:400;">Set columns</div>
<svg style="left:266px;top:535px;filter:blur(.7px);opacity:.88" width="34" height="31" viewBox="0 0 34 31"><path d="M17 14.2L33.8 22.2L17 30.2L0.2 22.2Z" fill="#fff"/><path d="M0.2 16.9L17 24.9L33.8 16.9" fill="none" stroke="#c4c4c4" stroke-width="1.5"/><path d="M17 7.4L33.8 15.4L17 23.4L0.2 15.4Z" fill="#fff"/><path d="M0.2 10.1L17 18.1L33.8 10.1" fill="none" stroke="#c4c4c4" stroke-width="1.5"/><path d="M17 0.5999999999999996L33.8 8.6L17 16.6L0.2 8.6Z" fill="#fff"/><text x="17" y="23" text-anchor="middle" style="font:700 21px 'Liberation Sans',sans-serif" fill="#b4b4b4" stroke="#b4b4b4" stroke-width=".9">S</text></svg>
<svg style="left:1798.4px;top:535px;filter:blur(.7px);opacity:.88" width="34" height="31" viewBox="0 0 34 31"><path d="M17 14.2L33.8 22.2L17 30.2L0.2 22.2Z" fill="#fff"/><path d="M0.2 16.9L17 24.9L33.8 16.9" fill="none" stroke="#c4c4c4" stroke-width="1.5"/><path d="M17 7.4L33.8 15.4L17 23.4L0.2 15.4Z" fill="#fff"/><path d="M0.2 10.1L17 18.1L33.8 10.1" fill="none" stroke="#c4c4c4" stroke-width="1.5"/><path d="M17 0.5999999999999996L33.8 8.6L17 16.6L0.2 8.6Z" fill="#fff"/><text x="17" y="23" text-anchor="middle" style="font:700 21px 'Liberation Sans',sans-serif" fill="#b4b4b4" stroke="#b4b4b4" stroke-width=".9">S</text></svg>
<svg style="left:187px;top:612.1px" width="27" height="26.2" viewBox="0 0 27 27" preserveAspectRatio="none"><rect width="27" height="27" rx="5" fill="#ab2419"/><path d="M11.3 5h4.4l-.7 11h-3z" fill="#fff"/><rect x="11.6" y="18.2" width="3.8" height="3.9" fill="#fff"/></svg>
<svg style="left:736.8px;top:610.0px" width="27" height="27" viewBox="0 0 27 27"><circle cx="13.5" cy="13.5" r="13.2" fill="#4166c2"/><path d="M9.1 13.5H17.9M13.5 9.1V17.9" stroke="#fff" stroke-width="2.6" stroke-linecap="round"/></svg>
<div class="t" style="left:774.4px;top:610.34px;font-size:26.65px;line-height:26.65px;color:#4166c2;font-weight:400;">Add Coverage</div>
<div class="t" style="left:955.3px;top:610.74px;font-size:25px;line-height:25px;color:#8a8a8a;font-weight:400;">for JCI_EXAM_XLS-VER-1</div>
<div class="cb" style="left:188px;top:686.8px;height:30px"></div>
<svg style="left:265px;top:682.0px;filter:blur(.75px)" width="36" height="36" viewBox="0 0 36 36"><defs><linearGradient id="og" x1="0" y1="0" x2="0.6" y2="1"><stop offset="0" stop-color="#e48d48"/><stop offset=".55" stop-color="#dc7a42"/><stop offset="1" stop-color="#cc5d3b"/></linearGradient></defs><path d="M9.4 4L18.6 0.2L19.8 13.6L17.4 18L13 22.4L6 26.6L0.6 28.6L0.4 18.6L8.8 13.4Z" fill="#f3caa2"/><path d="M19 0.2L26.2 4L26.8 13.2L35.6 19.2L35.8 29L31.4 27.4L24.6 22.4L21.2 18L19.4 13.6Z" fill="url(#og)"/><path d="M18 17.2L14.6 22.2H21.6Z" fill="#fbf4ee"/><path d="M1.6 29.6Q18 17.6 35 29.4L35.6 33L30.4 35.6L27 35.4Q18 27.4 9 35.6L3 34Z" fill="#cd5d3b"/></svg>
<div class="t" style="left:352.3px;top:693.24px;font-size:26.65px;line-height:26.65px;color:#4166c2;font-weight:400;">JCI_EXAM_XLS-SR_MINE-5</div>
<div class="t" style="left:804.1px;top:692.74px;font-size:26.65px;line-height:26.65px;color:#000;font-weight:400;">Durability</div>
<div class="t" style="left:1271.4px;top:692.74px;font-size:26.65px;line-height:26.65px;color:#000;font-weight:400;">Historically hearing aids are eith…</div>
<svg style="left:187px;top:768.1px" width="27" height="26.2" viewBox="0 0 27 27" preserveAspectRatio="none"><rect width="27" height="27" rx="5" fill="#ab2419"/><path d="M11.3 5h4.4l-.7 11h-3z" fill="#fff"/><rect x="11.6" y="18.2" width="3.8" height="3.9" fill="#fff"/></svg>
<svg style="left:736.8px;top:766.0px" width="27" height="27" viewBox="0 0 27 27"><circle cx="13.5" cy="13.5" r="13.2" fill="#4166c2"/><path d="M9.1 13.5H17.9M13.5 9.1V17.9" stroke="#fff" stroke-width="2.6" stroke-linecap="round"/></svg>
<div class="t" style="left:774.4px;top:766.34px;font-size:26.65px;line-height:26.65px;color:#4166c2;font-weight:400;">Add Coverage</div>
<div class="t" style="left:955.3px;top:766.74px;font-size:25px;line-height:25px;color:#8a8a8a;font-weight:400;">for JCI_EXAM_XLS-VER-2</div>
<div class="cb" style="left:188px;top:842.8px;height:30px"></div>
<svg style="left:265px;top:838.0px;filter:blur(.75px)" width="36" height="36" viewBox="0 0 36 36"><defs><linearGradient id="og" x1="0" y1="0" x2="0.6" y2="1"><stop offset="0" stop-color="#e48d48"/><stop offset=".55" stop-color="#dc7a42"/><stop offset="1" stop-color="#cc5d3b"/></linearGradient></defs><path d="M9.4 4L18.6 0.2L19.8 13.6L17.4 18L13 22.4L6 26.6L0.6 28.6L0.4 18.6L8.8 13.4Z" fill="#f3caa2"/><path d="M19 0.2L26.2 4L26.8 13.2L35.6 19.2L35.8 29L31.4 27.4L24.6 22.4L21.2 18L19.4 13.6Z" fill="url(#og)"/><path d="M18 17.2L14.6 22.2H21.6Z" fill="#fbf4ee"/><path d="M1.6 29.6Q18 17.6 35 29.4L35.6 33L30.4 35.6L27 35.4Q18 27.4 9 35.6L3 34Z" fill="#cd5d3b"/></svg>
<div class="t" style="left:352.3px;top:849.24px;font-size:26.65px;line-height:26.65px;color:#4166c2;font-weight:400;">JCI_EXAM_XLS-SR_MINE-8</div>
<div class="t" style="left:804.1px;top:848.74px;font-size:26.65px;line-height:26.65px;color:#000;font-weight:400;">Android Integration</div>
<div class="t" style="left:1256px;top:848.74px;font-size:26.65px;line-height:26.65px;color:#000;font-weight:400;">Many hearing aids on the market…</div>
<svg style="left:187px;top:923.1px" width="27" height="26.2" viewBox="0 0 27 27" preserveAspectRatio="none"><rect width="27" height="27" rx="5" fill="#ab2419"/><path d="M11.3 5h4.4l-.7 11h-3z" fill="#fff"/><rect x="11.6" y="18.2" width="3.8" height="3.9" fill="#fff"/></svg>
<svg style="left:736.8px;top:921.0px" width="27" height="27" viewBox="0 0 27 27"><circle cx="13.5" cy="13.5" r="13.2" fill="#4166c2"/><path d="M9.1 13.5H17.9M13.5 9.1V17.9" stroke="#fff" stroke-width="2.6" stroke-linecap="round"/></svg>
<div class="t" style="left:774.4px;top:921.34px;font-size:26.65px;line-height:26.65px;color:#4166c2;font-weight:400;">Add Coverage</div>
<div class="t" style="left:955.3px;top:921.74px;font-size:25px;line-height:25px;color:#8a8a8a;font-weight:400;">for JCI_EXAM_XLS-VER-3</div>
<div class="cb" style="left:188px;top:997.8px;height:30px"></div>
<svg style="left:265px;top:993.0px;filter:blur(.75px)" width="36" height="36" viewBox="0 0 36 36"><defs><linearGradient id="og" x1="0" y1="0" x2="0.6" y2="1"><stop offset="0" stop-color="#e48d48"/><stop offset=".55" stop-color="#dc7a42"/><stop offset="1" stop-color="#cc5d3b"/></linearGradient></defs><path d="M9.4 4L18.6 0.2L19.8 13.6L17.4 18L13 22.4L6 26.6L0.6 28.6L0.4 18.6L8.8 13.4Z" fill="#f3caa2"/><path d="M19 0.2L26.2 4L26.8 13.2L35.6 19.2L35.8 29L31.4 27.4L24.6 22.4L21.2 18L19.4 13.6Z" fill="url(#og)"/><path d="M18 17.2L14.6 22.2H21.6Z" fill="#fbf4ee"/><path d="M1.6 29.6Q18 17.6 35 29.4L35.6 33L30.4 35.6L27 35.4Q18 27.4 9 35.6L3 34Z" fill="#cd5d3b"/></svg>
<div class="t" style="left:352.3px;top:1004.24px;font-size:26.65px;line-height:26.65px;color:#4166c2;font-weight:400;">JCI_EXAM_XLS-SR_MINE-9</div>
<div class="t" style="left:804.1px;top:1003.74px;font-size:26.65px;line-height:26.65px;color:#000;font-weight:400;">iOS integration</div>
<div class="t" style="left:1256px;top:1003.74px;font-size:26.65px;line-height:26.65px;color:#000;font-weight:400;">Many hearing aid on the market r…</div>
<svg style="left:187px;top:1079.1px" width="27" height="26.2" viewBox="0 0 27 27" preserveAspectRatio="none"><rect width="27" height="27" rx="5" fill="#ab2419"/><path d="M11.3 5h4.4l-.7 11h-3z" fill="#fff"/><rect x="11.6" y="18.2" width="3.8" height="3.9" fill="#fff"/></svg>
<svg style="left:736.8px;top:1077.0px" width="27" height="27" viewBox="0 0 27 27"><circle cx="13.5" cy="13.5" r="13.2" fill="#4166c2"/><path d="M9.1 13.5H17.9M13.5 9.1V17.9" stroke="#fff" stroke-width="2.6" stroke-linecap="round"/></svg>
<div class="t" style="left:774.4px;top:1077.34px;font-size:26.65px;line-height:26.65px;color:#4166c2;font-weight:400;">Add Coverage</div>
<div class="t" style="left:955.3px;top:1077.74px;font-size:25px;line-height:25px;color:#8a8a8a;font-weight:400;">for JCI_EXAM_XLS-VER-4</div>
<div class="cb" style="left:188px;top:1153.8px;height:30px"></div>
<svg style="left:265px;top:1149.0px;filter:blur(.75px)" width="36" height="36" viewBox="0 0 36 36"><defs><linearGradient id="og" x1="0" y1="0" x2="0.6" y2="1"><stop offset="0" stop-color="#e48d48"/><stop offset=".55" stop-color="#dc7a42"/><stop offset="1" stop-color="#cc5d3b"/></linearGradient></defs><path d="M9.4 4L18.6 0.2L19.8 13.6L17.4 18L13 22.4L6 26.6L0.6 28.6L0.4 18.6L8.8 13.4Z" fill="#f3caa2"/><path d="M19 0.2L26.2 4L26.8 13.2L35.6 19.2L35.8 29L31.4 27.4L24.6 22.4L21.2 18L19.4 13.6Z" fill="url(#og)"/><path d="M18 17.2L14.6 22.2H21.6Z" fill="#fbf4ee"/><path d="M1.6 29.6Q18 17.6 35 29.4L35.6 33L30.4 35.6L27 35.4Q18 27.4 9 35.6L3 34Z" fill="#cd5d3b"/></svg>
<div class="t" style="left:352.3px;top:1160.24px;font-size:26.65px;line-height:26.65px;color:#4166c2;font-weight:400;">JCI_EXAM_XLS-SR_MINE-5</div>
<div class="t" style="left:804.1px;top:1159.74px;font-size:26.65px;line-height:26.65px;color:#000;font-weight:400;">Durability</div>
<div class="t" style="left:1271.4px;top:1159.74px;font-size:26.65px;line-height:26.65px;color:#000;font-weight:400;">Historically hearing aids are eith…</div>
<div class="cb" style="left:188px;top:1230.8px;height:30px"></div>
<svg style="left:265px;top:1226.0px;filter:blur(.75px)" width="36" height="36" viewBox="0 0 36 36"><defs><linearGradient id="og" x1="0" y1="0" x2="0.6" y2="1"><stop offset="0" stop-color="#e48d48"/><stop offset=".55" stop-color="#dc7a42"/><stop offset="1" stop-color="#cc5d3b"/></linearGradient></defs><path d="M9.4 4L18.6 0.2L19.8 13.6L17.4 18L13 22.4L6 26.6L0.6 28.6L0.4 18.6L8.8 13.4Z" fill="#f3caa2"/><path d="M19 0.2L26.2 4L26.8 13.2L35.6 19.2L35.8 29L31.4 27.4L24.6 22.4L21.2 18L19.4 13.6Z" fill="url(#og)"/><path d="M18 17.2L14.6 22.2H21.6Z" fill="#fbf4ee"/><path d="M1.6 29.6Q18 17.6 35 29.4L35.6 33L30.4 35.6L27 35.4Q18 27.4 9 35.6L3 34Z" fill="#cd5d3b"/></svg>
<div class="t" style="left:352.3px;top:1237.24px;font-size:26.65px;line-height:26.65px;color:#4166c2;font-weight:400;">JCI_EXAM_XLS-SR_MINE-6</div>
<div class="t" style="left:804.1px;top:1236.74px;font-size:26.65px;line-height:26.65px;color:#000;font-weight:400;">Waterproof</div>
<div class="t" style="left:1256px;top:1236.74px;font-size:26.65px;line-height:26.65px;color:#000;font-weight:400;">The system shall employ a metal…</div>
<svg style="left:187px;top:1312.1px" width="27" height="26.2" viewBox="0 0 27 27" preserveAspectRatio="none"><rect width="27" height="27" rx="5" fill="#ab2419"/><path d="M11.3 5h4.4l-.7 11h-3z" fill="#fff"/><rect x="11.6" y="18.2" width="3.8" height="3.9" fill="#fff"/></svg>
<svg style="left:736.8px;top:1310.0px" width="27" height="27" viewBox="0 0 27 27"><circle cx="13.5" cy="13.5" r="13.2" fill="#4166c2"/><path d="M9.1 13.5H17.9M13.5 9.1V17.9" stroke="#fff" stroke-width="2.6" stroke-linecap="round"/></svg>
<div class="t" style="left:774.4px;top:1310.34px;font-size:26.65px;line-height:26.65px;color:#4166c2;font-weight:400;">Add Coverage</div>
<div class="t" style="left:955.3px;top:1310.74px;font-size:25px;line-height:25px;color:#8a8a8a;font-weight:400;">for JCI_EXAM_XLS-VER-5</div>
<div class="cb" style="left:188px;top:1386.8px;height:30px"></div>
<svg style="left:265px;top:1382.0px;filter:blur(.75px)" width="36" height="36" viewBox="0 0 36 36"><defs><linearGradient id="og" x1="0" y1="0" x2="0.6" y2="1"><stop offset="0" stop-color="#e48d48"/><stop offset=".55" stop-color="#dc7a42"/><stop offset="1" stop-color="#cc5d3b"/></linearGradient></defs><path d="M9.4 4L18.6 0.2L19.8 13.6L17.4 18L13 22.4L6 26.6L0.6 28.6L0.4 18.6L8.8 13.4Z" fill="#f3caa2"/><path d="M19 0.2L26.2 4L26.8 13.2L35.6 19.2L35.8 29L31.4 27.4L24.6 22.4L21.2 18L19.4 13.6Z" fill="url(#og)"/><path d="M18 17.2L14.6 22.2H21.6Z" fill="#fbf4ee"/><path d="M1.6 29.6Q18 17.6 35 29.4L35.6 33L30.4 35.6L27 35.4Q18 27.4 9 35.6L3 34Z" fill="#cd5d3b"/></svg>
<div class="t" style="left:352.3px;top:1393.24px;font-size:26.65px;line-height:26.65px;color:#4166c2;font-weight:400;">JCI_EXAM_XLS-SR_MINE-11</div>
<div class="t" style="left:804.1px;top:1392.74px;font-size:26.65px;line-height:26.65px;color:#000;font-weight:400;">Windows Integration</div>
<div class="t" style="left:1256px;top:1392.74px;font-size:26.65px;line-height:26.65px;color:#000;font-weight:400;">Many hearing aids on the market…</div>
<svg style="left:187px;top:1468.1px" width="27" height="26.2" viewBox="0 0 27 27" preserveAspectRatio="none"><rect width="27" height="27" rx="5" fill="#ab2419"/><path d="M11.3 5h4.4l-.7 11h-3z" fill="#fff"/><rect x="11.6" y="18.2" width="3.8" height="3.9" fill="#fff"/></svg>
<svg style="left:729.5px;top:1466.0px" width="27" height="27" viewBox="0 0 27 27"><circle cx="13.5" cy="13.5" r="13.2" fill="#4166c2"/><path d="M9.1 13.5H17.9M13.5 9.1V17.9" stroke="#fff" stroke-width="2.6" stroke-linecap="round"/></svg>
<div class="t" style="left:767.1px;top:1466.34px;font-size:26.65px;line-height:26.65px;color:#4166c2;font-weight:400;">Add Coverage</div>
<div class="t" style="left:948.0px;top:1466.74px;font-size:25px;line-height:25px;color:#8a8a8a;font-weight:400;">for JCI_EXAM_XLS-VER-13</div>
<div class="cb" style="left:188px;top:1542.8px;height:30px"></div>
<svg style="left:265px;top:1538.0px;filter:blur(.75px)" width="36" height="36" viewBox="0 0 36 36"><defs><linearGradient id="og" x1="0" y1="0" x2="0.6" y2="1"><stop offset="0" stop-color="#e48d48"/><stop offset=".55" stop-color="#dc7a42"/><stop offset="1" stop-color="#cc5d3b"/></linearGradient></defs><path d="M9.4 4L18.6 0.2L19.8 13.6L17.4 18L13 22.4L6 26.6L0.6 28.6L0.4 18.6L8.8 13.4Z" fill="#f3caa2"/><path d="M19 0.2L26.2 4L26.8 13.2L35.6 19.2L35.8 29L31.4 27.4L24.6 22.4L21.2 18L19.4 13.6Z" fill="url(#og)"/><path d="M18 17.2L14.6 22.2H21.6Z" fill="#fbf4ee"/><path d="M1.6 29.6Q18 17.6 35 29.4L35.6 33L30.4 35.6L27 35.4Q18 27.4 9 35.6L3 34Z" fill="#cd5d3b"/></svg>
<div class="t" style="left:352.3px;top:1549.24px;font-size:26.65px;line-height:26.65px;color:#4166c2;font-weight:400;">JCI_EXAM_XLS-SR_MINE-15</div>
<div class="t" style="left:804.1px;top:1548.74px;font-size:26.65px;line-height:26.65px;color:#000;font-weight:400;">Battery Safety</div>
<div class="t" style="left:1256px;top:1548.74px;font-size:26.65px;line-height:26.65px;color:#000;font-weight:400;">The system shall comply with 62…</div>
<div class="cb" style="left:1719.3px;top:608.4px;width:31px;height:30.6px"></div>
<svg style="left:1797px;top:607.2px" width="35" height="31" viewBox="0 0 35 31"><path d="M1.4 27.6H33.6" stroke="#b9b9b9" stroke-width="2" style="filter:blur(.8px)"/><path d="M1.1 18.1L6.7 12.7L11.4 17.7L27.3 1.1L32.9 6.9L11.4 28.7Z" fill="#b55050" stroke="#a62c2c" stroke-width="1.1" stroke-dasharray="1.6 1.2"/></svg>
<div class="t" style="left:1883.3px;top:615.87px;font-size:26.5px;line-height:26.5px;color:#4166c2;font-weight:400;">JCI_EXAM_XLS-VER-1</div>
<div class="t" style="left:2222.6px;top:615.74px;font-size:26.65px;line-height:26.65px;color:#000;font-weight:400;">Hearing aid drop</div>
<div class="b" style="left:2561.7px;top:612.7px;width:307px;height:27.4px;background:#dcdcdc;border-radius:5px;"></div>
<div class="t" style="left:2900.6px;top:615.64px;font-size:26.65px;line-height:26.65px;color:#000;font-weight:400;">Scheduled</div>
<div class="cb" style="left:1719.3px;top:764.4px;width:31px;height:30.6px"></div>
<svg style="left:1797px;top:763.2px" width="35" height="31" viewBox="0 0 35 31"><path d="M1.4 27.6H33.6" stroke="#b9b9b9" stroke-width="2" style="filter:blur(.8px)"/><path d="M1.1 18.1L6.7 12.7L11.4 17.7L27.3 1.1L32.9 6.9L11.4 28.7Z" fill="#b55050" stroke="#a62c2c" stroke-width="1.1" stroke-dasharray="1.6 1.2"/></svg>
<div class="t" style="left:1883.3px;top:770.87px;font-size:26.5px;line-height:26.5px;color:#4166c2;font-weight:400;">JCI_EXAM_XLS-VER-2</div>
<div class="t" style="left:2222.6px;top:770.74px;font-size:26.65px;line-height:26.65px;color:#000;font-weight:400;">Android integration</div>
<div class="b" style="left:2561.7px;top:768.7px;width:307px;height:27.4px;background:#dcdcdc;border-radius:5px;"></div>
<div class="t" style="left:2900.6px;top:770.64px;font-size:26.65px;line-height:26.65px;color:#000;font-weight:400;">Scheduled</div>
<div class="cb" style="left:1719.3px;top:919.4px;width:31px;height:30.6px"></div>
<svg style="left:1797px;top:918.2px" width="35" height="31" viewBox="0 0 35 31"><path d="M1.4 27.6H33.6" stroke="#b9b9b9" stroke-width="2" style="filter:blur(.8px)"/><path d="M1.1 18.1L6.7 12.7L11.4 17.7L27.3 1.1L32.9 6.9L11.4 28.7Z" fill="#b55050" stroke="#a62c2c" stroke-width="1.1" stroke-dasharray="1.6 1.2"/></svg>
<div class="t" style="left:1883.3px;top:926.87px;font-size:26.5px;line-height:26.5px;color:#4166c2;font-weight:400;">JCI_EXAM_XLS-VER-3</div>
<div class="t" style="left:2222.6px;top:926.74px;font-size:26.65px;line-height:26.65px;color:#000;font-weight:400;">iOS integration</div>
<div class="b" style="left:2561.7px;top:923.7px;width:307px;height:27.4px;background:#dcdcdc;border-radius:5px;"></div>
<div class="t" style="left:2900.6px;top:926.64px;font-size:26.65px;line-height:26.65px;color:#000;font-weight:400;">Scheduled</div>
<div class="cb" style="left:1719.3px;top:1075.4px;width:31px;height:30.6px"></div>
<svg style="left:1797px;top:1074.2px" width="35" height="31" viewBox="0 0 35 31"><path d="M1.4 27.6H33.6" stroke="#b9b9b9" stroke-width="2" style="filter:blur(.8px)"/><path d="M1.1 18.1L6.7 12.7L11.4 17.7L27.3 1.1L32.9 6.9L11.4 28.7Z" fill="#b55050" stroke="#a62c2c" stroke-width="1.1" stroke-dasharray="1.6 1.2"/></svg>
<div class="t" style="left:1883.3px;top:1081.87px;font-size:26.5px;line-height:26.5px;color:#4166c2;font-weight:400;">JCI_EXAM_XLS-VER-4</div>
<div class="t" style="left:2222.6px;top:1081.74px;font-size:26.65px;line-height:26.65px;color:#000;font-weight:400;">Underwater immersion</div>
<div class="b" style="left:2561.7px;top:1079.7px;width:307px;height:27.4px;background:#dcdcdc;border-radius:5px;"></div>
<div class="t" style="left:2900.6px;top:1081.64px;font-size:26.65px;line-height:26.65px;color:#000;font-weight:400;">Scheduled</div>
<div class="cb" style="left:1719.3px;top:1308.4px;width:31px;height:30.6px"></div>
<svg style="left:1797px;top:1307.2px" width="35" height="31" viewBox="0 0 35 31"><path d="M1.4 27.6H33.6" stroke="#b9b9b9" stroke-width="2" style="filter:blur(.8px)"/><path d="M1.1 18.1L6.7 12.7L11.4 17.7L27.3 1.1L32.9 6.9L11.4 28.7Z" fill="#b55050" stroke="#a62c2c" stroke-width="1.1" stroke-dasharray="1.6 1.2"/></svg>
<div class="t" style="left:1883.3px;top:1315.87px;font-size:26.5px;line-height:26.5px;color:#4166c2;font-weight:400;">JCI_EXAM_XLS-VER-5</div>
<div class="t" style="left:2222.6px;top:1315.74px;font-size:26.65px;line-height:26.65px;color:#000;font-weight:400;">Windows mobile validat…</div>
<div class="b" style="left:2561.7px;top:1312.7px;width:307px;height:27.4px;background:#dcdcdc;border-radius:5px;"></div>
<div class="t" style="left:2900.6px;top:1315.64px;font-size:26.65px;line-height:26.65px;color:#000;font-weight:400;">Scheduled</div>
<div class="cb" style="left:1719.3px;top:1464.4px;width:31px;height:30.6px"></div>
<svg style="left:1797px;top:1463.2px" width="35" height="31" viewBox="0 0 35 31"><path d="M1.4 27.6H33.6" stroke="#b9b9b9" stroke-width="2" style="filter:blur(.8px)"/><path d="M1.1 18.1L6.7 12.7L11.4 17.7L27.3 1.1L32.9 6.9L11.4 28.7Z" fill="#b55050" stroke="#a62c2c" stroke-width="1.1" stroke-dasharray="1.6 1.2"/></svg>
<div class="t" style="left:1883.3px;top:1470.87px;font-size:26.5px;line-height:26.5px;color:#4166c2;font-weight:400;">JCI_EXAM_XLS-VER-13</div>
<div class="t" style="left:2222.6px;top:1470.74px;font-size:26.65px;line-height:26.65px;color:#000;font-weight:400;">Battery Safety testing</div>
<div class="b" style="left:2561.7px;top:1468.7px;width:307px;height:27.4px;background:#dcdcdc;border-radius:5px;"></div>
<div class="t" style="left:2900.6px;top:1470.64px;font-size:26.65px;line-height:26.65px;color:#000;font-weight:400;">Scheduled</div>
<svg style="left:1078.6px;top:1652.2px" width="31" height="31" viewBox="0 0 32 32"><circle cx="16" cy="16" r="15" fill="#6d9fdc" stroke="#b9d0ee" stroke-width="2"/><circle cx="16" cy="16" r="10.5" fill="#3f78c4"/><rect x="14" y="6" width="4" height="4" fill="#fff"/><rect x="14" y="12" width="4" height="12" fill="#fff"/></svg>
<div class="t" style="left:1127.6px;top:1652.16px;font-size:29.7px;line-height:29.7px;color:#000;font-weight:400;">This is a Non-Production version of Jama.</div>
<div class="t" style="left:1687px;top:1652.16px;font-size:29.7px;line-height:29.7px;color:#2257a5;font-weight:400;">Please contact Jama for proper guidelines.</div>
</div></body></html>
